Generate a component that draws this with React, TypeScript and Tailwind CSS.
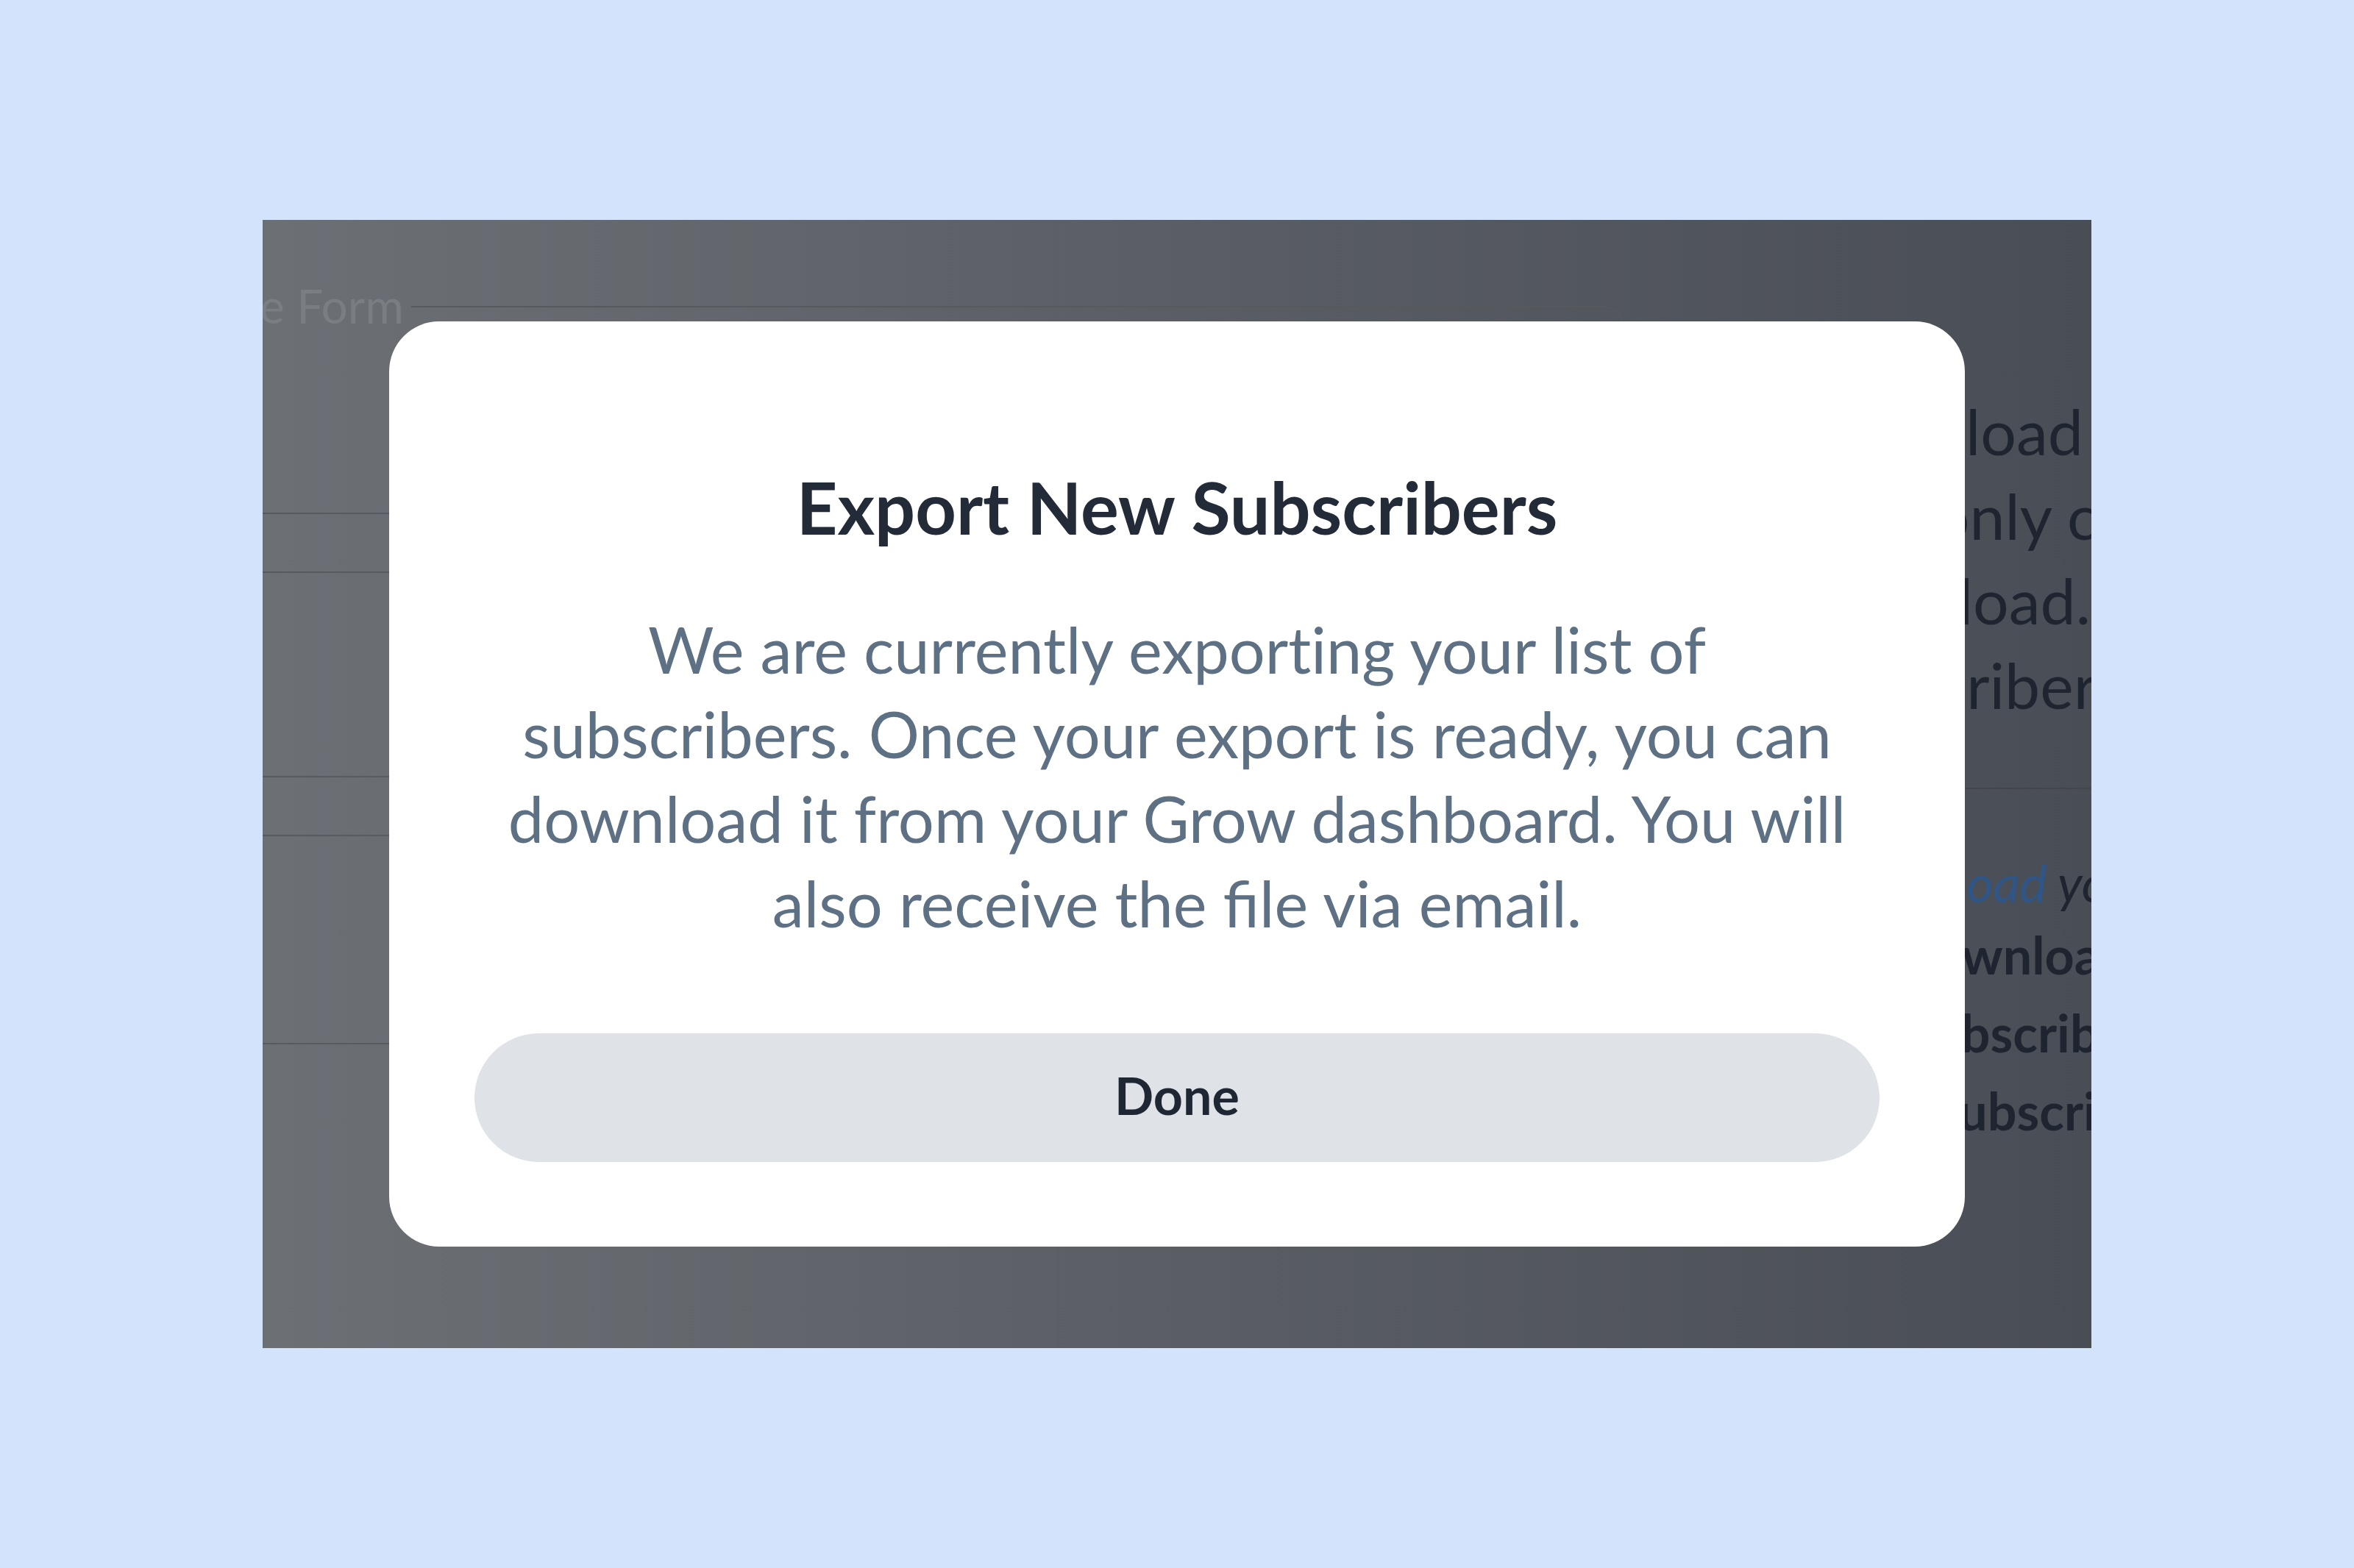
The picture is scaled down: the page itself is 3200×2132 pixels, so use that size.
import React from "react";

// ZWNJ keeps Lato from joining "t" and "i" in "exporting", like the reference
const bodyLines = [
  "We are currently export\u200Cing your list of",
  "subscribers. Once your export is ready, you can",
  "download it from your Grow dashboard. You will",
  "also receive the file via email.",
];

function BackgroundPage() {
  return (
    <div className="flex h-full">
      {/* form fieldset, mostly hidden behind the modal */}
      <div className="w-[1851px] shrink-0 flex flex-col pt-[81px]">
        <div className="flex items-center h-[72px]">
          <span className="-ml-[4px] pr-[10px] text-[64px] leading-none text-[#7a7d82]">e Form</span>
          <div className="flex-1 self-end h-[36px] border-t-2 border-r-2 border-[#56595e] rounded-tr-[28px]" />
        </div>
        <div className="flex flex-col border-r-2 border-[#56595e]">
          <div className="h-[247px] border-b-2 border-[#575a5f]" />
          <div className="h-[80px] border-b-2 border-[#575a5f]" />
          <div className="h-[278px] border-b-2 border-[#575a5f]" />
          <div className="h-[80px] border-b-2 border-[#575a5f]" />
          <div className="h-[283px] border-b-2 border-[#575a5f]" />
          <div className="h-[160px]" />
        </div>
      </div>

      {/* right column with help text */}
      <div className="flex-1 flex flex-col pt-[229px] text-[#1e2530]">
        <div className="flex flex-col items-end pb-[83px] border-b-2 border-[#43464c] text-[86px] leading-[115px] whitespace-nowrap">
          <div className="mr-[11px]">download</div>
          <div className="-mr-[8px]">only c</div>
          <div className="mr-[1px]">download.</div>
          <div className="-mr-[7px]">subscriber</div>
        </div>
        <div className="mt-[78px] flex flex-col items-end whitespace-nowrap">
          <div className="-mr-[84px] text-[70px] leading-[98px] italic">
            <span className="text-[#2f5687]">download</span> your
          </div>
          <div className="-mt-[4px] flex flex-col items-end text-[70px] leading-[106px] font-bold">
            <div className="-mr-[52px]">Download</div>
            <div className="-mr-[48px]">Subscribe</div>
            <div className="-mr-[110px]">Subscriber</div>
          </div>
        </div>
      </div>
    </div>
  );
}

export default function App() {
  return (
    <div className="w-[3200px] h-[2132px] bg-[#d3e3fb] flex items-center justify-center font-[Lato,sans-serif]">
      <div className="relative w-[2486px] h-[1534px] overflow-hidden bg-linear-to-r from-[#6c6f74] to-[#494d55]">
        <BackgroundPage />

        <div className="absolute inset-0 flex items-center justify-center">
          <div className="w-[2142px] bg-white rounded-[68px] pt-[195px] px-[116px] pb-[115px] flex flex-col items-center">
            <h1 className="text-[97px] leading-[116px] font-bold text-[#222b37] whitespace-nowrap">
              Export New Subscribers
            </h1>
            <p className="mt-[77px] text-center text-[86.5px] leading-[115px] text-[#5e7184] whitespace-nowrap">
              {bodyLines.map((line, i) => (
                <React.Fragment key={i}>
                  {line}
                  {i < bodyLines.length - 1 && <br />}
                </React.Fragment>
              ))}
            </p>
            <button className="mt-[120px] w-full h-[175px] pb-[6px] rounded-full bg-[#dfe2e7] flex items-center justify-center text-[70px] font-bold text-[#1e2733]">
              Done
            </button>
          </div>
        </div>
      </div>
    </div>
  );
}
